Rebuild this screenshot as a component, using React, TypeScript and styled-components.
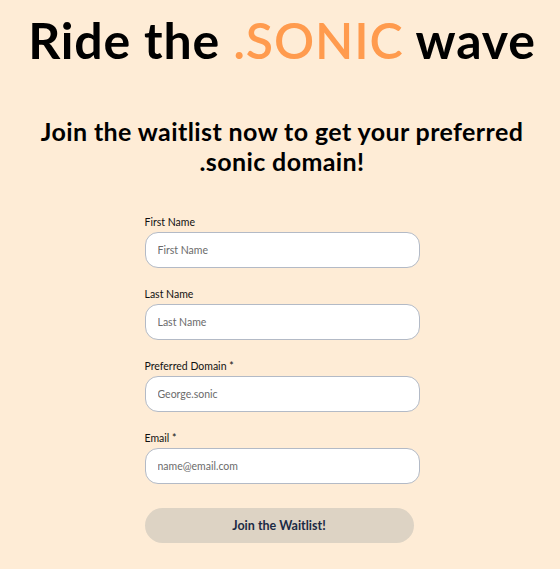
import React from "react";
import styled, { createGlobalStyle } from "styled-components";

const GlobalStyle = createGlobalStyle`
  html, body {
    margin: 0;
    padding: 0;
    background: #feecd6;
  }
  body {
    font-family: "Lato", "Noto Sans", sans-serif;
    color: #000;
  }
`;

type Field = {
  label: string;
  placeholder: string;
  type?: string;
};

const fields: Field[] = [
  { label: "First Name", placeholder: "First Name" },
  { label: "Last Name", placeholder: "Last Name" },
  { label: "Preferred Domain *", placeholder: "George.sonic" },
  { label: "Email *", placeholder: "name@email.com", type: "email" },
];

export default function App() {
  return (
    <>
      <GlobalStyle />
      <Page>
        <Title>
          Ride the <Accent>.SONIC</Accent> wave
        </Title>
        <Subtitle>
          Join the waitlist now to get your preferred
          <br />
          .sonic domain!
        </Subtitle>
        <Form onSubmit={(e) => e.preventDefault()}>
          {fields.map((f) => (
            <FieldGroup key={f.label}>
              <Label>{f.label}</Label>
              <Input type={f.type ?? "text"} placeholder={f.placeholder} />
            </FieldGroup>
          ))}
          <SubmitButton type="submit">Join the Waitlist!</SubmitButton>
        </Form>
      </Page>
    </>
  );
}

const Page = styled.div`
  display: flex;
  flex-direction: column;
  align-items: center;
  min-height: 569px;
  padding: 10px 0 0 4px;
  box-sizing: border-box;
`;

const Title = styled.h1`
  margin: 0;
  font-size: 50px;
  font-weight: 700;
  line-height: 60px;
  letter-spacing: 0.85px;
  text-align: center;
`;

const Accent = styled.span`
  color: #ff9b4e;
  font-weight: 600;
`;

const Subtitle = styled.h2`
  margin: 46px 0 0;
  font-size: 25px;
  font-weight: 700;
  line-height: 30px;
  letter-spacing: 0.4px;
  text-align: center;
`;

const Form = styled.form`
  display: flex;
  flex-direction: column;
  width: 275px;
  margin-top: 40px;
`;

const FieldGroup = styled.div`
  display: flex;
  flex-direction: column;
  gap: 4px;
  margin-bottom: 20px;
`;

const Label = styled.label`
  font-size: 10.5px;
  line-height: 12px;
  color: #111;
`;

const Input = styled.input`
  box-sizing: border-box;
  height: 36px;
  width: 100%;
  padding: 0 12px;
  border: 1.5px solid #b3bac6;
  border-radius: 13px;
  background: #fff;
  font-family: inherit;
  font-size: 10.5px;
  color: #333;
  outline: none;

  &::placeholder {
    color: #6b6b6b;
  }
`;

const SubmitButton = styled.button`
  margin-top: 4px;
  width: 269px;
  height: 35px;
  border: none;
  border-radius: 18px;
  background: #ddd3c4;
  color: #1b2a44;
  font-family: inherit;
  font-size: 12.5px;
  font-weight: 700;
  cursor: pointer;
`;
